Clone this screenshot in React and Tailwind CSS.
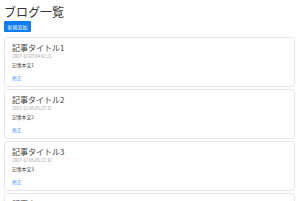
import React from "react";

const posts = [
  { id: 1, title: "記事タイトル1", date: "2017-12-07 04:42:21", body: "記事本文1" },
  { id: 2, title: "記事タイトル2", date: "2017-12-05 05:27:32", body: "記事本文2" },
  { id: 3, title: "記事タイトル3", date: "2017-12-05 05:27:32", body: "記事本文3" },
  { id: 4, title: "記事タイトル4", date: "2017-12-05 05:27:32", body: "記事本文4" },
];

const font = { fontFamily: '"Noto Sans CJK JP", "Liberation Sans", sans-serif' };

const PostCard = ({ post }) => {
  return (
    <div className="h-[50px] shrink-0 border border-[#e6e6e6] rounded-[3px] px-[7px] pt-[5px] bg-white overflow-hidden">
      <h3 className="text-[8px] leading-[10px] text-[#444]">{post.title}</h3>
      <p className="text-[4.3px] leading-[7px] text-[#999]">{post.date}</p>
      <p className="text-[4.8px] leading-[9px] text-[#333]">{post.body}</p>
      <a href="#" className="block mt-[5px] text-[4.8px] leading-[7px] text-[#3b8af5]">修正</a>
    </div>
  );
};

const App = () => {
  return (
    <div className="h-screen overflow-hidden bg-white px-[4px] pt-[4px]" style={font}>
      <h1 className="text-[12px] leading-[16px] text-[#333]">ブログ一覧</h1>
      <button className="block mt-[1px] h-[11px] w-[27px] bg-[#0d7cf2] text-white text-[5px] leading-[11px] rounded-[1px] text-center">新規追加</button>
      <div className="mt-[5px] w-[291px] flex flex-col gap-[2px]">
        {posts.map((p) => (
          <PostCard key={p.id} post={p} />
        ))}
      </div>
    </div>
  );
};

export default App;
